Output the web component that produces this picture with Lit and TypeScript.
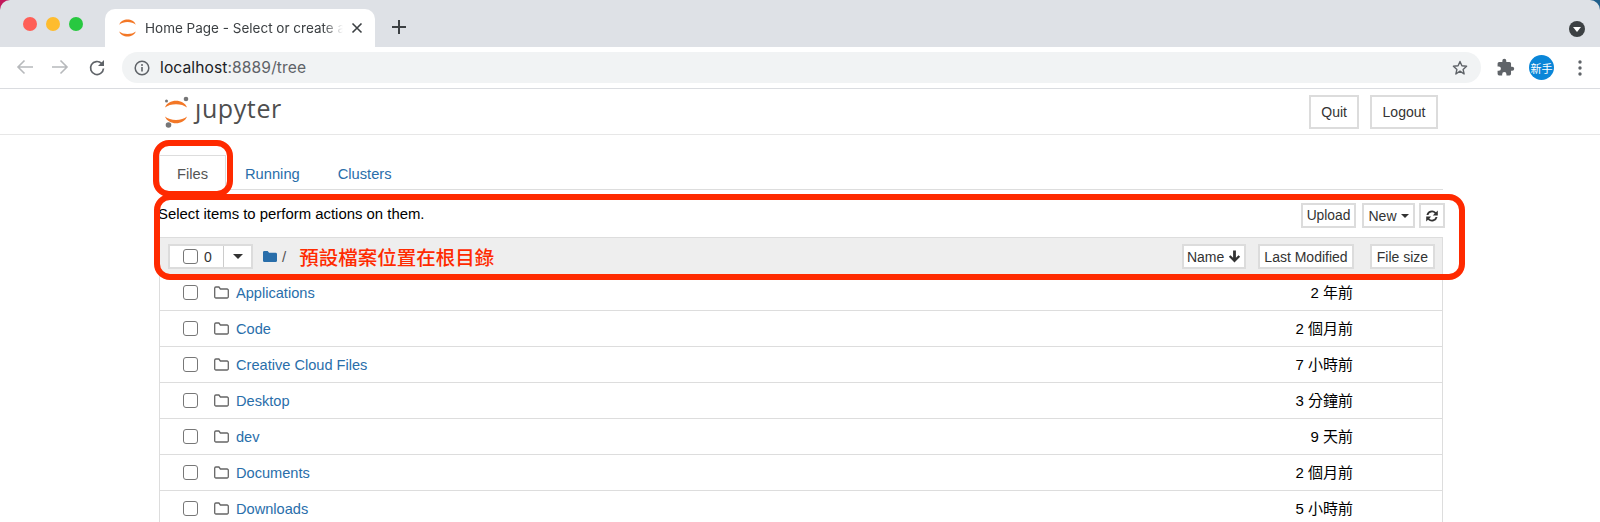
import { LitElement, html, css, svg } from "lit";
import { customElement } from "lit/decorators.js";

const rows = [
  ["Applications", "2 年前"],
  ["Code", "2 個月前"],
  ["Creative Cloud Files", "7 小時前"],
  ["Desktop", "3 分鐘前"],
  ["dev", "9 天前"],
  ["Documents", "2 個月前"],
  ["Downloads", "5 小時前"],
];

// the two orange arcs of the jupyter mark, in a 22x24 box
const arcs = svg`
  <path d="M0 7.500C3-1.500 19-1.500 22 7.500C17 3 5 3 0 7.500Z" fill="#f37726"/>
  <path d="M0 16.500C3 25.500 19 25.500 22 16.500C17 21 5 21 0 16.500Z" fill="#f37726"/>
`;

@customElement("app-root")
export class AppRoot extends LitElement {
  static styles = css`
    :host {
      display: block;
      position: relative;
      height: 522px;
      overflow: hidden;
      background: #fff;
      font-family: "Liberation Sans", Arial, "Noto Sans CJK TC", sans-serif;
      font-size: 15px;
      color: #000;
    }
    .corner-l, .corner-r {
      position: absolute;
      top: 0;
      width: 10px;
      height: 10px;
    }
    .corner-l { left: 0; background: #c2185b; }
    .corner-r { right: 0; background: #1f5f8b; }
    .tabstrip {
      position: relative;
      display: flex;
      height: 47px;
      box-sizing: border-box;
      padding-top: 1px;
      background: #dee1e6;
      border-radius: 10px 10px 0 0;
      z-index: 1;
    }
    .lights {
      display: flex;
      gap: 9px;
      padding: 16px 0 0 23px;
      width: 105px;
      box-sizing: border-box;
    }
    .lights i {
      width: 14px;
      height: 14px;
      border-radius: 50%;
    }
    .tab {
      display: flex;
      align-items: center;
      box-sizing: border-box;
      width: 270px;
      margin-top: 8px;
      padding: 0 0 0 14px;
      background: #fff;
      border-radius: 10px 10px 0 0;
      color: #3c4043;
      font-family: Inter, "Liberation Sans", sans-serif;
      font-size: 13.5px;
    }
    .tab svg { flex: none; }
    .tab-title {
      width: 198px;
      margin-left: 9px;
      white-space: nowrap;
      -webkit-mask-image: linear-gradient(to right, #000 90%, transparent 100%);
      mask-image: linear-gradient(to right, #000 90%, transparent 100%);
    }
    .tab-close { margin-left: 8px; }
    .plus { margin: 19px 0 0 17px; }
    .down { margin: 20px 15px 0 auto; }
    .toolbar {
      display: flex;
      align-items: center;
      height: 42px;
      box-sizing: border-box;
      border-bottom: 1px solid #dadce0;
    }
    .nav {
      display: flex;
      gap: 17px;
      width: 122px;
      padding-left: 16px;
      box-sizing: border-box;
    }
    .nav svg:last-child { margin-left: 2px; }
    .omni {
      display: flex;
      align-items: center;
      width: 1359px;
      height: 31px;
      box-sizing: border-box;
      padding: 0 13px 0 12px;
      background: #f1f3f4;
      border-radius: 16px;
      font-family: Inter, "Liberation Sans", sans-serif;
      font-size: 15.600px;
      letter-spacing: 0.1px;
      color: #5f6368;
    }
    .omni b { font-weight: 400; color: #202124; }
    .omni .url { margin-left: 10px; flex: 1; }
    .ext {
      display: flex;
      align-items: center;
      padding-left: 15px;
    }
    .avatar {
      display: flex;
      align-items: center;
      justify-content: center;
      width: 25px;
      height: 25px;
      margin: 0 24px 0 14px;
      border-radius: 50%;
      background: #0a86d8;
      color: #fff;
      font-family: "Noto Sans CJK TC", sans-serif;
      font-size: 11px;
    }
    .header {
      display: flex;
      align-items: center;
      justify-content: space-between;
      height: 46px;
      box-sizing: border-box;
      padding: 0 162px 0 164px;
      border-bottom: 1px solid #e7e7e7;
    }
    .logo {
      display: flex;
      align-items: center;
      gap: 5px;
      color: #4e4e4e;
      font-family: "Open Sans", sans-serif;
      font-size: 25px;
      letter-spacing: 0.6px;
      line-height: 1;
    }
    .logo .word { position: relative; top: -3px; }
    .logo .j {
      display: inline-block;
      clip-path: inset(7px -4px -8px -8px);
    }
    .btns { display: flex; gap: 11px; }
    .btn {
      display: inline-flex;
      align-items: center;
      justify-content: center;
      box-sizing: border-box;
      background: #fff;
      border: 2px solid #dcdcdc;
      color: #333;
      font-size: 14px;
    }
    .header .btn {
      height: 34px;
      padding: 0 10px;
    }
    .header .btn.logout { width: 68px; padding: 0; }
    .main {
      width: 1284px;
      margin-left: 159px;
    }
    .tabs {
      display: flex;
      height: 55px;
      box-sizing: border-box;
      padding-top: 20px;
      border-bottom: 1px solid #ddd;
    }
    .tabs a {
      display: flex;
      align-items: center;
      box-sizing: border-box;
      height: 35px;
      padding: 2px 19px 0;
      color: #296eaa;
      font-size: 14.700px;
    }
    .tabs a.active {
      width: 67px;
      padding: 2px 0 0;
      justify-content: center;
      color: #555;
      background: #fff;
      border: 1px solid #ddd;
      border-bottom: none;
    }
    .actions {
      display: flex;
      justify-content: space-between;
      height: 47px;
      padding-top: 13px;
      box-sizing: border-box;
      font-size: 14.900px;
    }
    .actions p { margin: 3px 0 0 -1px; line-height: 17px; }
    .action-btns { display: flex; gap: 4px; margin-right: -2px; }
    .action-btns .btn, .crumbs .btn {
      height: 25px;
      padding: 0;
    }
    .action-btns .upload { width: 55px; margin-right: 2px; font-size: 13.800px; }
    .action-btns .new { width: 53px; }
    .action-btns .refresh { width: 26px; }
    .caret {
      display: inline-block;
      margin-left: 4px;
      border-top: 4px solid #333;
      border-left: 4px solid transparent;
      border-right: 4px solid transparent;
    }
    .crumbs {
      display: flex;
      align-items: center;
      height: 38px;
      box-sizing: border-box;
      padding: 0 7px 0 8px;
      background: #eee;
      border: 1px solid #ddd;
      border-bottom: none;
    }
    .select {
      display: flex;
      height: 25px;
      box-sizing: border-box;
      background: #fff;
      border: 2px solid #dcdcdc;
      font-size: 14px;
    }
    .select div {
      display: flex;
      align-items: center;
    }
    .select .count {
      width: 54px;
      padding-left: 13px;
      box-sizing: border-box;
      gap: 6px;
      border-right: 1px solid #ccc;
      color: #333;
    }
    .select .more {
      width: 27px;
      justify-content: center;
    }
    .select .more .caret {
      margin: 0;
      border-top-width: 5px;
      border-left-width: 5px;
      border-right-width: 5px;
    }
    .box {
      display: block;
      flex: none;
      box-sizing: border-box;
      width: 15px;
      height: 15px;
      border: 1.500px solid #777;
      border-radius: 3px;
      background: #fff;
    }
    .path {
      display: flex;
      align-items: center;
      margin-left: 10px;
      color: #555;
    }
    .path svg { margin-right: 5px; }
    .note {
      margin-left: 13px;
      color: #ff2a00;
      font-family: "Noto Sans CJK TC", sans-serif;
      font-size: 19.500px;
      font-weight: 500;
    }
    .sort {
      display: flex;
      margin-left: auto;
    }
    .sort .name { width: 64px; }
    .sort .modified { width: 96px; margin-left: 12px; }
    .sort .size { width: 65px; margin-left: 16px; }
    .list {
      border: 1px solid #ddd;
      border-top: none;
    }
    .row {
      display: flex;
      align-items: center;
      height: 36px;
      box-sizing: border-box;
      padding-left: 23px;
      border-bottom: 1px solid #ddd;
    }
    .row a { margin-left: 7px; color: #296eaa; font-size: 14.600px; }
    .row svg { margin-left: 16px; }
    .row .time {
      margin-left: auto;
      padding: 0 89px 3px 0;
    }
    .mark {
      position: absolute;
      box-sizing: border-box;
      border: 6px solid #ff2a00;
      z-index: 2;
      pointer-events: none;
    }
    .mark.tabmark {
      left: 153px;
      top: 140px;
      width: 80px;
      height: 57px;
      border-radius: 16px;
    }
    .mark.barmark {
      left: 154px;
      top: 194px;
      width: 1311px;
      height: 86px;
      border-radius: 16px;
    }
  `;

  render() {
    return html`
      <i class="corner-l"></i><i class="corner-r"></i>
      <div class="tabstrip">
        <div class="lights">
          <i style="background:#ff5f57"></i><i style="background:#febc2e"></i><i style="background:#28c840"></i>
        </div>
        <div class="tab">
          <svg width="17" height="18" viewBox="0 0 22 24">${arcs}</svg>
          <div class="tab-title">Home Page - Select or create a</div>
          <svg class="tab-close" width="12" height="12" viewBox="0 0 12 12"><path d="M1.500 1.500l9 9M10.500 1.500l-9 9" stroke="#3c4043" stroke-width="1.600"/></svg>
        </div>
        <svg class="plus" width="14" height="14" viewBox="0 0 14 14"><path d="M7 0v14M0 7h14" stroke="#3c4043" stroke-width="2"/></svg>
        <svg class="down" width="16" height="16" viewBox="0 0 16 16"><circle cx="8" cy="8" r="8" fill="#3c4043"/><path d="M4 6h8l-4 5z" fill="#fff"/></svg>
      </div>
      <div class="toolbar">
        <div class="nav">
          <svg width="18" height="16" viewBox="0 0 18 16"><path d="M17 8H2M8.500 1.500L2 8l6.500 6.500" fill="none" stroke="#b7b9bc" stroke-width="1.600"/></svg>
          <svg width="18" height="16" viewBox="0 0 18 16"><path d="M1 8h15M9.500 1.500L16 8l-6.500 6.500" fill="none" stroke="#b7b9bc" stroke-width="1.600"/></svg>
          <svg width="18" height="18" viewBox="0 0 18 18"><path d="M15.500 9.500A6.500 6.500 0 1 1 13.600 4.400" fill="none" stroke="#5f6368" stroke-width="1.700"/><path d="M16 1v6h-6z" fill="#5f6368"/></svg>
        </div>
        <div class="omni">
          <svg width="16" height="16" viewBox="0 0 16 16"><circle cx="8" cy="8" r="6.800" fill="none" stroke="#5f6368" stroke-width="1.500"/><path d="M8 7v4.500" stroke="#5f6368" stroke-width="1.600"/><circle cx="8" cy="4.900" r="1" fill="#5f6368"/></svg>
          <div class="url"><b>localhost</b>:8889/tree</div>
          <svg width="16" height="16" viewBox="0 0 16 16"><path d="M8 1.500l1.900 4.300 4.700.5-3.500 3.100 1 4.600L8 11.200l-4.100 2.800 1-4.600-3.500-3.100 4.700-.5z" fill="none" stroke="#5f6368" stroke-width="1.400" stroke-linejoin="round"/></svg>
        </div>
        <div class="ext">
          <svg width="19" height="19" viewBox="0 0 24 24"><path d="M20.500 11H19V7a2 2 0 0 0-2-2h-4V3.500a2.500 2.500 0 0 0-5 0V5H4a2 2 0 0 0-2 2v3.800h1.500a2.700 2.700 0 0 1 0 5.400H2V20a2 2 0 0 0 2 2h3.800v-1.500a2.700 2.700 0 0 1 5.400 0V22H17a2 2 0 0 0 2-2v-4h1.500a2.500 2.500 0 0 0 0-5z" fill="#5f6368"/></svg>
          <div class="avatar">新手</div>
          <svg width="4" height="16" viewBox="0 0 4 16"><circle cx="2" cy="2" r="1.700" fill="#5f6368"/><circle cx="2" cy="8" r="1.700" fill="#5f6368"/><circle cx="2" cy="14" r="1.700" fill="#5f6368"/></svg>
        </div>
      </div>
      <div class="header">
        <div class="logo">
          <svg width="26" height="32" viewBox="0 0 26 32">
            <g transform="translate(1 4)">${arcs}</g>
            <circle cx="22" cy="3" r="2.300" fill="#767677"/>
            <circle cx="2.500" cy="5" r="1.500" fill="#767677"/>
            <circle cx="4.500" cy="29" r="2.800" fill="#767677"/>
          </svg>
          <span class="word"><span class="j">j</span>upyter</span>
        </div>
        <div class="btns">
          <div class="btn">Quit</div>
          <div class="btn logout">Logout</div>
        </div>
      </div>
      <div class="main">
        <div class="tabs">
          <a class="active">Files</a>
          <a>Running</a>
          <a>Clusters</a>
        </div>
        <div class="actions">
          <p>Select items to perform actions on them.</p>
          <div class="action-btns">
            <div class="btn upload">Upload</div>
            <div class="btn new">New<i class="caret"></i></div>
            <div class="btn refresh">
              <svg width="14" height="14" viewBox="0 0 14 14"><path d="M1.500 6A5.600 5.600 0 0 1 11 3.200L12.800 1.500V6.500H7.800L9.700 4.600A3.700 3.700 0 0 0 3.400 6zM12.500 8A5.600 5.600 0 0 1 3 10.800L1.200 12.500V7.500H6.200L4.300 9.400A3.700 3.700 0 0 0 10.600 8z" fill="#333"/></svg>
            </div>
          </div>
        </div>
        <div class="crumbs">
          <div class="select">
            <div class="count"><i class="box"></i>0</div>
            <div class="more"><i class="caret"></i></div>
          </div>
          <div class="path">
            <svg width="14" height="13" viewBox="0 0 15 13"><path d="M0 2a1.500 1.500 0 0 1 1.500-1.500h3.500l1.500 2h7A1.500 1.500 0 0 1 15 4v7a1.500 1.500 0 0 1-1.500 1.500h-12A1.500 1.500 0 0 1 0 11z" fill="#296eaa"/></svg>
            /
          </div>
          <div class="note">預設檔案位置在根目錄</div>
          <div class="sort">
            <div class="btn name">Name&nbsp;<svg width="13" height="13" viewBox="0 0 12 12"><path d="M6 11.500L.8 6.300l1.500-1.500L4.700 7.200V.5h2.600v6.700l2.400-2.400 1.500 1.500z" fill="#333"/></svg></div>
            <div class="btn modified">Last Modified</div>
            <div class="btn size">File size</div>
          </div>
        </div>
        <div class="list">
          ${rows.map(
            ([name, time]) => html`
              <div class="row">
                <i class="box"></i>
                <svg width="15" height="13" viewBox="0 0 15 13"><path d="M.7 2.200A1.200 1.200 0 0 1 1.900 1h3l1.500 2h6.700a1.200 1.200 0 0 1 1.200 1.200v6.600a1.200 1.200 0 0 1-1.200 1.200H1.900a1.200 1.200 0 0 1-1.200-1.200z" fill="none" stroke="#666" stroke-width="1.300"/></svg>
                <a>${name}</a>
                <span class="time">${time}</span>
              </div>
            `
          )}
        </div>
      </div>
      <div class="mark tabmark"></div>
      <div class="mark barmark"></div>
    `;
  }
}
